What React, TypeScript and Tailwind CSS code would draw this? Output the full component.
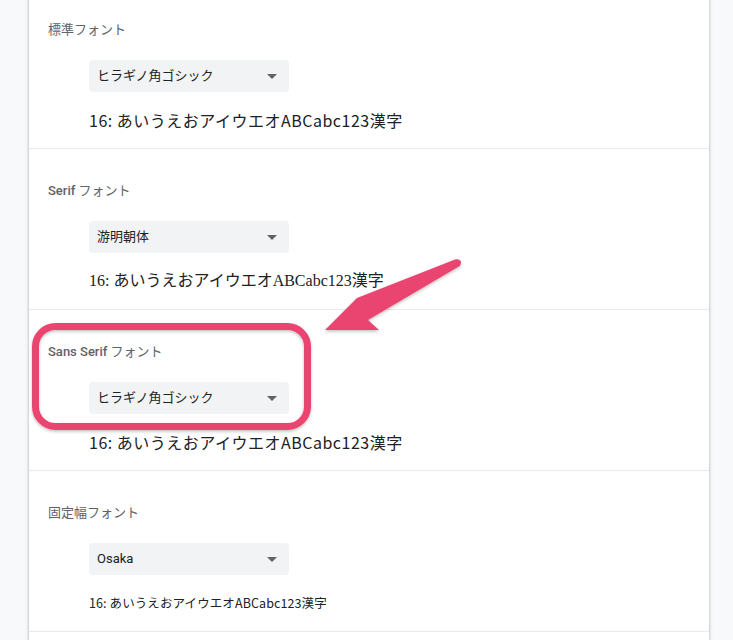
const SAMPLE = "16: あいうえおアイウエオABCabc123漢字";

type FontRow = {
  label: string;
  latin?: string;
  value: string;
  sampleClass: string;
};

const rows: FontRow[] = [
  {
    label: "標準フォント",
    value: "ヒラギノ角ゴシック",
    sampleClass: "text-[16px] font-['Noto_Sans_CJK_JP',sans-serif] tracking-[0.5px]",
  },
  {
    latin: "Serif",
    label: " フォント",
    value: "游明朝体",
    sampleClass: "text-[16px] font-['Liberation_Serif','Noto_Sans_CJK_JP',serif]",
  },
  {
    latin: "Sans Serif",
    label: " フォント",
    value: "ヒラギノ角ゴシック",
    sampleClass: "text-[16px] font-['Noto_Sans_CJK_JP',sans-serif] tracking-[0.5px]",
  },
  {
    label: "固定幅フォント",
    value: "Osaka",
    sampleClass: "text-[12.5px] font-['Noto_Sans_CJK_JP',sans-serif] tracking-[0.1px]",
  },
];

function Select({ value }: { value: string }) {
  return (
    <div className="ml-[41px] flex h-8 w-[200px] items-center justify-between rounded bg-[#f1f3f4] pl-2 pr-2">
      <span className="text-[13px] text-[#202124]">{value}</span>
      <svg width="10" height="5" viewBox="0 0 10 5" className="mr-[4px]">
        <path d="M0 0h10L5 5z" fill="#5f6368" />
      </svg>
    </div>
  );
}

function Section({ row }: { row: FontRow }) {
  return (
    <div className="border-b border-[#e8eaed] pb-[16px] pl-[19px] pt-[34px]">
      <div className="text-[13px] leading-4 text-[#5f6368]">
        {row.latin ? <span className="font-medium">{row.latin}</span> : null}
        {row.label}
      </div>
      <div className="mt-[22px]">
        <Select value={row.value} />
      </div>
      <div
        className={`ml-[41px] mt-[16px] h-6 leading-6 text-[#202124] ${row.sampleClass}`}
      >
        {SAMPLE}
      </div>
    </div>
  );
}

function Annotation() {
  return (
    <svg
      className="pointer-events-none absolute left-0 top-0"
      width="733"
      height="640"
      viewBox="0 0 733 640"
    >
      <defs>
        <filter id="sh" x="-20%" y="-20%" width="140%" height="140%">
          <feDropShadow dx="0" dy="1.5" stdDeviation="1.5" floodColor="#000" floodOpacity="0.25" />
        </filter>
      </defs>
      <rect
        x="35.5"
        y="326.5"
        width="272"
        height="100"
        rx="20"
        fill="none"
        stroke="#e94570"
        strokeWidth="7"
        filter="url(#sh)"
      />
      <path
        d="M455 259.5 Q461 258.5 461 263 Q460.5 266 458 267 L368 320 L379 330 L325 330 L357 298 Z"
        fill="#e94570"
        strokeLinejoin="round"
        filter="url(#sh)"
      />
    </svg>
  );
}

export default function App() {
  return (
    <div className="relative h-[640px] w-[733px] overflow-hidden bg-[#f8f9fa] font-['Roboto','Noto_Sans_CJK_JP',sans-serif]">
      <div className="ml-[29px] mt-[-12px] w-[680px] bg-white shadow-[0_1px_2px_rgba(60,64,67,0.3),0_1px_3px_1px_rgba(60,64,67,0.15)]">
        {rows.map((row) => (
          <Section key={row.value + row.label} row={row} />
        ))}
        <div className="h-[80px]" />
      </div>
      <Annotation />
    </div>
  );
}
